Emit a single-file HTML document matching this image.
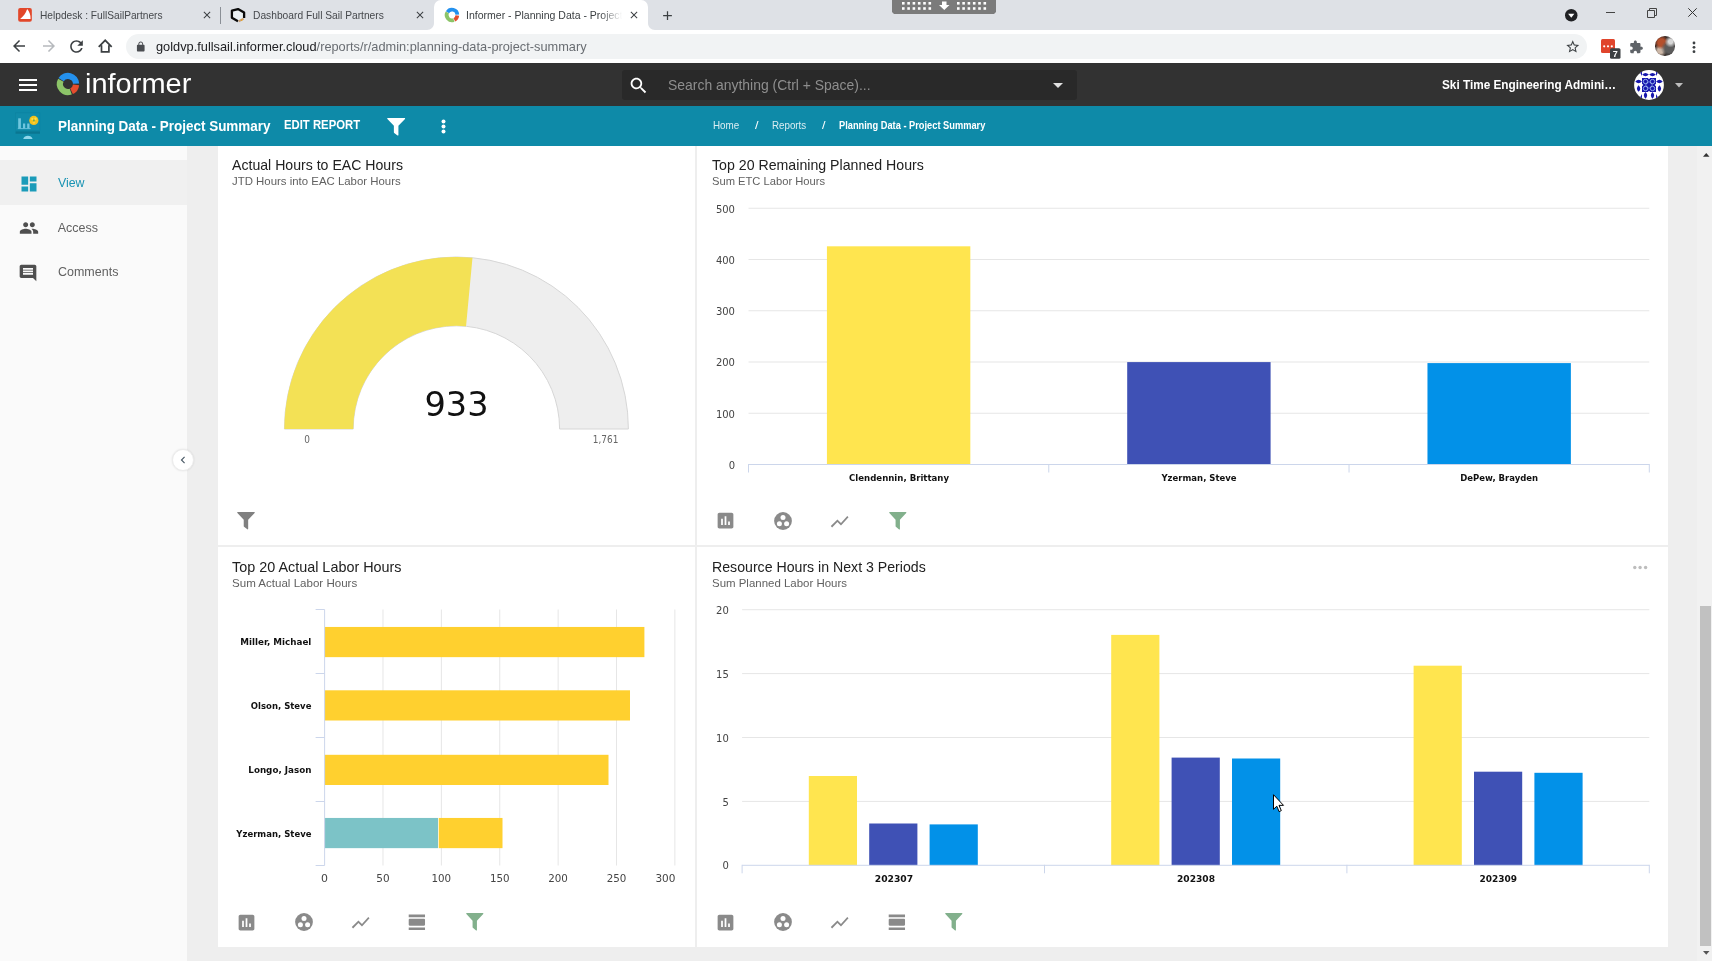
<!DOCTYPE html>
<html lang="en">
<head>
<meta charset="utf-8">
<title>Informer - Planning Data - Project Summary</title>
<style>
*{box-sizing:border-box;margin:0;padding:0}
html,body{width:1712px;height:961px;overflow:hidden;background:#eeeeee;font-family:"Liberation Sans",sans-serif;color:#212121}
#wrap{position:absolute;left:0;top:0;width:1712px;height:961px;overflow:hidden;will-change:transform;opacity:.9999}
.abs{position:absolute}
.t{position:absolute;white-space:nowrap;line-height:1;transform-origin:0 0}
#tabbar{left:0;top:0;width:1712px;height:30px;background:#dee1e6}
#addr{left:0;top:30px;width:1712px;height:33px;background:#ffffff}
#pill{left:126px;top:34px;width:1460.5px;height:25px;border-radius:12.5px;background:#f1f3f4}
#apphead{left:0;top:63px;width:1712px;height:43px;background:#323232}
#teal{left:0;top:106px;width:1712px;height:40px;background:#0e8aa8}
#side{left:0;top:146px;width:187px;height:815px;background:#fafafa}
#sideactive{left:0;top:160px;width:187px;height:45px;background:#f0f0f0}
#main{left:187px;top:146px;width:1525px;height:815px;background:#eeeeee}
.card{position:absolute;background:#fff}
svg{position:absolute;overflow:visible}
.cf{font-family:"DejaVu Sans","Liberation Sans",sans-serif}
</style>
</head>
<body>
<div id="wrap">
<!-- ===== browser chrome ===== -->
<div id="tabbar" class="abs"></div>
<div id="addr" class="abs"></div>
<div id="pill" class="abs"></div>
<div class="abs" style="left:434px;top:0;width:214px;height:30px;background:#fff;border-radius:7px 7px 0 0"></div>
<svg style="left:427px;top:23px" width="7" height="7" viewBox="0 0 7 7"><path fill="#fff" d="M7 0v7H0C4 7 7 4 7 0z"/></svg>
<svg style="left:648px;top:23px" width="7" height="7" viewBox="0 0 7 7"><path fill="#fff" d="M0 0v7h7C3 7 0 4 0 0z"/></svg>
<svg style="left:18px;top:8.100px" width="14" height="13.700" viewBox="0 0 14 14"><rect width="14" height="14" rx="2" fill="#e2472a"/><path fill="#fff" d="M9.200 1C8 5 5 9 2 11.300H12.700C12.900 7 11.500 3.500 9.200 1z"/></svg>
<div class="t" style="left:39.70px;top:9.75px;font:400 10.70px/1 'Liberation Sans',sans-serif;letter-spacing:0.000px;color:#45484c;transform:scaleX(0.9508);">Helpdesk : FullSailPartners</div>
<svg style="left:201.00px;top:9.00px" width="12.00" height="12.00" viewBox="0 0 24 24"><path fill="#3c4043" d="M19 6.410L17.590 5 12 10.590 6.410 5 5 6.410 10.590 12 5 17.590 6.410 19 12 13.410 17.590 19 19 17.590 13.410 12z" /></svg>
<div class="abs" style="left:220px;top:7px;width:1px;height:17px;background:#8a8f96"></div>
<svg style="left:229px;top:6px" width="18" height="18" viewBox="229 6 18 18"><path fill="#eaf0f3" d="M238 9l5.300 3v6.200l-5.300 3-5.300-3V12z"/><path fill="none" stroke="#0a0a0a" stroke-width="2.300" stroke-linejoin="round" d="M238 21.200l-6.100-3.500v-7.100L238 9.100l6.100 3.500v5.400"/><path fill="none" stroke="#c8a078" stroke-width="2" d="M243.600 18.600L238.600 21.300"/><circle cx="241.700" cy="20" r=".8" fill="#f2a000"/></svg>
<div class="t" style="left:253.00px;top:9.75px;font:400 10.70px/1 'Liberation Sans',sans-serif;letter-spacing:0.000px;color:#45484c;transform:scaleX(0.9576);">Dashboard Full Sail Partners</div>
<svg style="left:414.00px;top:9.00px" width="12.00" height="12.00" viewBox="0 0 24 24"><path fill="#3c4043" d="M19 6.410L17.590 5 12 10.590 6.410 5 5 6.410 10.590 12 5 17.590 6.410 19 12 13.410 17.590 19 19 17.590 13.410 12z" /></svg>
<svg style="left:442.500px;top:5.900px" width="18" height="18" viewBox="-9 -9 18 18"><g fill="none" stroke-width="3.70"><path stroke="#2491ee" d="M-4.54 -2.84A5.35 5.35 0 0 1 5.34 -0.28"/><path stroke="#8cc468" d="M1.83 5.03A5.35 5.35 0 0 1 -4.72 -2.51"/><path stroke="#e44d2e" d="M5.32 0.56A5.35 5.35 0 0 1 2.35 4.81"/></g></svg>
<div class="t" style="left:466px;top:0;width:160px;height:30px;overflow:hidden"><div class="t" style="left:0.30px;top:9.75px;font:400 10.70px/1 'Liberation Sans',sans-serif;letter-spacing:0.000px;color:#3c4043;transform:scaleX(0.9834);">Informer - Planning Data - Project Summary</div></div>
<div class="abs" style="left:600px;top:6px;width:26px;height:20px;background:linear-gradient(90deg,rgba(255,255,255,0),#fff 85%)"></div>
<svg style="left:627.50px;top:9.00px" width="12.00" height="12.00" viewBox="0 0 24 24"><path fill="#3c4043" d="M19 6.410L17.590 5 12 10.590 6.410 5 5 6.410 10.590 12 5 17.590 6.410 19 12 13.410 17.590 19 19 17.590 13.410 12z" /></svg>
<svg style="left:659.50px;top:7.50px" width="15.00" height="15.00" viewBox="0 0 24 24"><path fill="#3c4043" d="M19 13h-6v6h-2v-6H5v-2h6V5h2v6h6v2z" /></svg>
<svg style="left:892px;top:0" width="104" height="14" viewBox="0 0 104 14"><path fill="#7b7b7b" d="M0 0h104v12l-2 2H2l-2-2z"/><rect x="10.0" y="2.0" width="2.600" height="2.600" fill="#fff"/><rect x="10.0" y="7.2" width="2.600" height="2.600" fill="#fff"/><rect x="15.3" y="2.0" width="2.600" height="2.600" fill="#fff"/><rect x="15.3" y="7.2" width="2.600" height="2.600" fill="#fff"/><rect x="20.6" y="2.0" width="2.600" height="2.600" fill="#fff"/><rect x="20.6" y="7.2" width="2.600" height="2.600" fill="#fff"/><rect x="25.9" y="2.0" width="2.600" height="2.600" fill="#fff"/><rect x="25.9" y="7.2" width="2.600" height="2.600" fill="#fff"/><rect x="31.2" y="2.0" width="2.600" height="2.600" fill="#fff"/><rect x="31.2" y="7.2" width="2.600" height="2.600" fill="#fff"/><rect x="36.5" y="2.0" width="2.600" height="2.600" fill="#fff"/><rect x="36.5" y="7.2" width="2.600" height="2.600" fill="#fff"/><rect x="65.0" y="2.0" width="2.600" height="2.600" fill="#fff"/><rect x="65.0" y="7.2" width="2.600" height="2.600" fill="#fff"/><rect x="70.3" y="2.0" width="2.600" height="2.600" fill="#fff"/><rect x="70.3" y="7.2" width="2.600" height="2.600" fill="#fff"/><rect x="75.6" y="2.0" width="2.600" height="2.600" fill="#fff"/><rect x="75.6" y="7.2" width="2.600" height="2.600" fill="#fff"/><rect x="80.9" y="2.0" width="2.600" height="2.600" fill="#fff"/><rect x="80.9" y="7.2" width="2.600" height="2.600" fill="#fff"/><rect x="86.2" y="2.0" width="2.600" height="2.600" fill="#fff"/><rect x="86.2" y="7.2" width="2.600" height="2.600" fill="#fff"/><rect x="91.5" y="2.0" width="2.600" height="2.600" fill="#fff"/><rect x="91.5" y="7.2" width="2.600" height="2.600" fill="#fff"/><path fill="#fff" d="M50 1.500h4.500v3.500h3l-5.250 5-5.250-5h3z"/></svg>
<svg style="left:1565px;top:9px" width="12.500" height="12.500" viewBox="0 0 12 12"><circle cx="6" cy="6" r="6" fill="#202124"/><path fill="#fff" d="M3 4.500h6L6 8.500z"/></svg>
<div class="abs" style="left:1606px;top:12px;width:9px;height:1px;background:#444"></div>
<svg style="left:1647px;top:8px" width="10" height="10" viewBox="0 0 10 10"><path fill="none" stroke="#444" stroke-width="1" d="M.5 2.500h7v7h-7zM2.500 2.500v-2h7v7h-2"/></svg>
<svg style="left:1688px;top:8px" width="9" height="9" viewBox="0 0 9 9"><path fill="none" stroke="#333" stroke-width="1" d="M.3.300l8.400 8.400M8.700.300L.3 8.700"/></svg>
<svg style="left:10.30px;top:37.40px" width="18.00" height="18.00" viewBox="0 0 24 24"><path fill="#3c4043" d="M20 11H7.83l5.590-5.590L12 4l-8 8 8 8 1.41-1.41L7.83 13H20v-2z" /></svg>
<svg style="left:39.50px;top:37.40px" width="18.00" height="18.00" viewBox="0 0 24 24"><path fill="#b6b9bd" d="M12 4l-1.41 1.41L16.170 11H4v2h12.170l-5.580 5.590L12 20l8-8z" /></svg>
<svg style="left:66.50px;top:36.80px" width="19.00" height="19.00" viewBox="0 0 24 24"><path fill="#3c4043" d="M17.65 6.350C16.200 4.900 14.210 4 12 4c-4.420 0-7.990 3.580-7.990 8s3.570 8 7.990 8c3.730 0 6.840-2.550 7.730-6h-2.080c-.82 2.330-3.040 4-5.650 4-3.310 0-6-2.690-6-6s2.690-6 6-6c1.660 0 3.140.69 4.220 1.780L13 11h7V4l-2.350 2.350z" /></svg>
<svg style="left:96px;top:37px" width="18" height="18" viewBox="96 37 18 18"><path fill="none" stroke="#3c4043" stroke-width="1.700" d="M98.700 46.900L105.200 40.300L111.700 46.900M101.500 45.200V51.900H108.900V45.200"/></svg>
<svg style="left:135.20px;top:40.50px" width="11.50" height="11.50" viewBox="0 0 24 24"><path fill="#4a4d51" d="M18 8h-1V6c0-2.760-2.240-5-5-5S7 3.240 7 6v2H6c-1.100 0-2 .9-2 2v10c0 1.100.9 2 2 2h12c1.100 0 2-.9 2-2V10c0-1.100-.9-2-2-2zm-2.900 0H8.900V6c0-1.710 1.390-3.100 3.100-3.100 1.710 0 3.100 1.390 3.100 3.100v2z" /></svg>
<div class="t" style="left:155.70px;top:40.70px;font:400 12.40px/1 'Liberation Sans',sans-serif;letter-spacing:0.000px;color:#202124;transform:scaleX(1.0317);">goldvp.fullsail.informer.cloud<span style="color:#696d72">/reports/r/admin:planning-data-project-summary</span></div>
<svg style="left:1564.50px;top:38.50px" width="15.50" height="15.50" viewBox="0 0 24 24"><path fill="#3c4043" d="M22 9.240l-7.190-.62L12 2 9.190 8.630 2 9.240l5.460 4.730L5.820 21 12 17.270 18.180 21l-1.630-7.030L22 9.240zM12 15.400l-3.760 2.270 1-4.280-3.320-2.880 4.380-.38L12 6.100l1.710 4.040 4.380.38-3.320 2.880 1 4.280L12 15.400z" /></svg>
<svg style="left:1601px;top:39px" width="20" height="20" viewBox="0 0 20 20"><rect width="14" height="14" rx="1.500" fill="#e0452c"/><circle cx="3.200" cy="7.300" r="1.100" fill="#fff"/><circle cx="7" cy="7.300" r="1.100" fill="#fff"/><circle cx="10.800" cy="7.300" r="1.100" fill="#fff"/><rect x="9" y="9.200" width="10.500" height="10.600" rx="1.500" fill="#3c4043"/><text x="14.300" y="18" font-family="Liberation Sans" font-weight="700" font-size="9" fill="#fff" text-anchor="middle">7</text></svg>
<svg style="left:1629.10px;top:39.70px" width="14.50" height="14.50" viewBox="0 0 24 24"><path fill="#5f6368" d="M20.500 11H19V7c0-1.100-.9-2-2-2h-4V3.500C13 2.120 11.880 1 10.500 1S8 2.120 8 3.500V5H4c-1.100 0-1.990.9-1.990 2v3.800H3.500c1.490 0 2.700 1.210 2.700 2.700s-1.210 2.700-2.700 2.700H2V20c0 1.100.9 2 2 2h3.800v-1.500c0-1.490 1.210-2.700 2.700-2.700 1.490 0 2.700 1.210 2.700 2.700V22H17c1.100 0 2-.9 2-2v-4h1.500c1.380 0 2.500-1.120 2.500-2.500S21.880 11 20.500 11z" /></svg>
<div class="abs" style="left:1655.200px;top:36.400px;width:20px;height:19.600px;border-radius:50%;background:radial-gradient(circle at 78% 28%,#d8d8d8 0 10%,transparent 28%),radial-gradient(circle at 72% 62%,#5c5c5c 0 22%,transparent 45%),radial-gradient(circle at 32% 32%,#b5502c 0 18%,transparent 38%),radial-gradient(circle at 28% 72%,#cdb8a8 0 14%,transparent 32%),radial-gradient(circle at 50% 50%,#7a3a22 0 20%,transparent 45%),#2e2522"></div>
<svg style="left:1692px;top:40.500px" width="4" height="14" viewBox="0 0 4 14"><circle cx="2" cy="2" r="1.400" fill="#3c4043"/><circle cx="2" cy="6.300" r="1.400" fill="#3c4043"/><circle cx="2" cy="10.700" r="1.400" fill="#3c4043"/></svg>
<!-- ===== app header ===== -->
<div id="apphead" class="abs"></div>
<svg style="left:15.70px;top:72.70px" width="24.00" height="24.00" viewBox="0 0 24 24"><path fill="#fff" d="M3 18h18v-2H3v2zm0-5h18v-2H3v2zm0-7v2h18V6H3z" /></svg>
<svg style="left:54.100px;top:70.400px" width="28" height="28" viewBox="-14 -14 28 28"><g fill="none" stroke-width="6.20"><path stroke="#2491ee" d="M-6.87 -4.29A8.10 8.10 0 0 1 8.09 -0.42"/><path stroke="#8cc468" d="M2.77 7.61A8.10 8.10 0 0 1 -7.15 -3.80"/><path stroke="#e44d2e" d="M8.06 0.85A8.10 8.10 0 0 1 3.55 7.28"/></g></svg>
<div class="t" style="left:84.50px;top:70.50px;font:400 27.00px/1 'Liberation Sans',sans-serif;letter-spacing:0.000px;color:#fff;transform:scaleX(1.0737);">informer</div>
<div class="abs" style="left:622px;top:70px;width:455px;height:30px;border-radius:3px;background:#292929"></div>
<svg style="left:627.80px;top:74.50px" width="21.30" height="21.30" viewBox="0 0 24 24"><path fill="#fff" d="M15.5 14h-.79l-.28-.27C15.41 12.59 16 11.11 16 9.5 16 5.91 13.09 3 9.5 3S3 5.91 3 9.5 5.91 16 9.5 16c1.61 0 3.09-.59 4.23-1.57l.27.28v.79l5 4.99L20.49 19l-4.99-5zm-6 0C7.01 14 5 11.99 5 9.5S7.01 5 9.5 5 14 7.01 14 9.5 11.99 14 9.5 14z" /></svg>
<div class="t" style="left:667.50px;top:77.60px;font:400 14.20px/1 'Liberation Sans',sans-serif;letter-spacing:0.000px;color:#8e8e8e;transform:scaleX(0.9821);">Search anything (Ctrl + Space)...</div>
<svg style="left:1045.50px;top:73.20px" width="24.00" height="24.00" viewBox="0 0 24 24"><path fill="#e0e0e0" d="M7 10l5 5 5-5z" /></svg>
<div class="t" style="left:1441.80px;top:77.50px;font:700 13.60px/1 'Liberation Sans',sans-serif;letter-spacing:0.000px;color:#fff;transform:scaleX(0.8667);">Ski Time Engineering Admini…</div>
<svg style="left:1634px;top:69.800px" width="30" height="30" viewBox="0 0 30 30"><defs><clipPath id="avc"><circle cx="15" cy="15" r="14.900"/></clipPath></defs><g clip-path="url(#avc)"><rect width="30" height="30" fill="#fff"/><rect x="8" y="8" width="14" height="14" fill="#1717ad"/><circle cx="11.5" cy="11.5" r="2.200" fill="none" stroke="#bcdcff" stroke-width=".75"/><circle cx="18.5" cy="11.5" r="2.200" fill="none" stroke="#bcdcff" stroke-width=".75"/><circle cx="11.5" cy="18.5" r="2.200" fill="none" stroke="#bcdcff" stroke-width=".75"/><circle cx="18.5" cy="18.5" r="2.200" fill="none" stroke="#bcdcff" stroke-width=".75"/><path fill="none" stroke="#bcdcff" stroke-width=".5" d="M15 11.500l3.500 3.500-3.500 3.500-3.500-3.500z"/><path fill="#fff" d="M13.800 8h2.400L15 9.300zM13.800 22h2.400L15 20.700zM8 13.800v2.400L9.300 15zM22 13.800v2.400L20.700 15z"/><path fill="#1717ad" d="M8.20 4.60Q11.50 1.20 14.80 4.60Q11.50 8.00 8.20 4.60z"/><path fill="#1717ad" d="M15.20 4.60Q18.50 1.20 21.80 4.60Q18.50 8.00 15.20 4.60z"/><path fill="#1717ad" d="M11.50 22.10Q14.90 25.40 11.50 28.70Q8.10 25.40 11.50 22.10z"/><path fill="#1717ad" d="M18.50 22.10Q21.90 25.40 18.50 28.70Q15.10 25.40 18.50 22.10z"/><path fill="#1717ad" d="M1.30 11.50Q4.60 8.10 7.90 11.50Q4.60 14.90 1.30 11.50z"/><path fill="#1717ad" d="M4.60 15.20Q8.00 18.50 4.60 21.80Q1.20 18.50 4.60 15.20z"/><path fill="#1717ad" d="M22.10 11.50Q25.40 8.10 28.70 11.50Q25.40 14.90 22.10 11.50z"/><path fill="#1717ad" d="M25.40 15.20Q28.80 18.50 25.40 21.80Q22.00 18.50 25.40 15.20z"/><path fill="#1717ad" d="M8 1.500v4.500l-2-3.500zM22 1.500v4.500l2-3.500zM8 28.500v-4.500l-2 3.500zM22 28.500v-4.500l2 3.500z"/></g></svg>
<svg style="left:1674.500px;top:82.500px" width="8" height="4.500" viewBox="0 0 8 4.500"><path fill="#bdbdbd" d="M0 0h8L4 4.500z"/></svg>
<div id="teal" class="abs"></div>
<svg style="left:14px;top:110px" width="30" height="32" viewBox="14 110 30 32"><rect x="15.300" y="112.900" width="24.600" height="17.800" fill="#108ba9" stroke="#0c819e" stroke-width=".5"/><rect x="15.500" y="131.400" width="24.500" height="2.300" fill="#0a7691"/><g fill="#6fc6de"><rect x="18.200" y="118.300" width="2.700" height="10.200"/><rect x="23" y="123.500" width="2.200" height="5"/><rect x="27.200" y="123.500" width="2.300" height="5"/><rect x="17.800" y="128" width="12.800" height="1.100" opacity=".8"/></g><circle cx="33.800" cy="120.400" r="4.600" fill="#f2c21c"/><circle cx="32.300" cy="119" r="1.100" fill="#ffe04a"/><circle cx="35.500" cy="118.800" r="1.200" fill="#ffe04a"/><circle cx="33.900" cy="122.600" r="1.200" fill="#ffd23a"/><circle cx="33.900" cy="120.500" r=".9" fill="#6aa84f"/><path fill="#8fd6ea" d="M23.200 138.900c1.200-4.300 8.200-4.300 9.400 0z"/></svg>
<div class="t" style="left:58.20px;top:118.65px;font:700 14.30px/1 'Liberation Sans',sans-serif;letter-spacing:0.000px;color:#fff;transform:scaleX(0.9420);">Planning Data - Project Summary</div>
<div class="t" style="left:284.20px;top:119.05px;font:700 12.90px/1 'Liberation Sans',sans-serif;letter-spacing:0.000px;color:#fff;transform:scaleX(0.8777);">EDIT REPORT</div>
<svg style="left:387.00px;top:117.50px" width="18.40" height="17.70" viewBox="-0.5 0 19 18" preserveAspectRatio="none"><path fill="#fff" d="M0.3 0h17.4c.5 0 .7.5.4.9L11.300 8v9.300c0 .5-.5.8-.9.500L6.900 15.200c-.2-.15-.3-.4-.3-.6V8L-.1.9C-.4.5-.2 0 .3 0z"/></svg>
<svg style="left:440.500px;top:118.500px" width="5" height="15" viewBox="0 0 5 15"><circle cx="2.500" cy="2.500" r="2" fill="#fff"/><circle cx="2.500" cy="7.500" r="2" fill="#fff"/><circle cx="2.500" cy="12.500" r="2" fill="#fff"/></svg>
<div class="t" style="left:713.20px;top:120.00px;font:400 10.60px/1 'Liberation Sans',sans-serif;letter-spacing:0.000px;color:rgba(255,255,255,.85);transform:scaleX(0.9293);">Home</div>
<div class="t" style="left:754.50px;top:120.00px;font:400 10.60px/1 'Liberation Sans',sans-serif;letter-spacing:0.000px;color:#fff;transform:scaleX(1.1864);">/</div>
<div class="t" style="left:772.00px;top:120.00px;font:400 10.60px/1 'Liberation Sans',sans-serif;letter-spacing:0.000px;color:rgba(255,255,255,.85);transform:scaleX(0.9218);">Reports</div>
<div class="t" style="left:821.50px;top:120.00px;font:400 10.60px/1 'Liberation Sans',sans-serif;letter-spacing:0.000px;color:#fff;transform:scaleX(1.1864);">/</div>
<div class="t" style="left:839.30px;top:120.00px;font:700 10.60px/1 'Liberation Sans',sans-serif;letter-spacing:0.000px;color:#fff;transform:scaleX(0.8751);">Planning Data - Project Summary</div>
<!-- ===== sidebar ===== -->
<div id="main" class="abs"></div>
<div id="side" class="abs"></div>
<div id="sideactive" class="abs"></div>
<svg style="left:18.60px;top:174.00px" width="20.00" height="20.00" viewBox="0 0 24 24"><path fill="#1b9bb9" d="M3 13h8V3H3v10zm0 8h8v-6H3v6zm10 0h8V11h-8v10zm0-18v6h8V3h-8z" /></svg>
<div class="t" style="left:57.70px;top:176.75px;font:400 12.50px/1 'Liberation Sans',sans-serif;letter-spacing:0.000px;color:#1993b3;transform:scaleX(0.9870);">View</div>
<svg style="left:18.60px;top:218.30px" width="20.00" height="20.00" viewBox="0 0 24 24"><path fill="#4f4f4f" d="M16 11c1.66 0 2.99-1.34 2.99-3S17.66 5 16 5c-1.66 0-3 1.34-3 3s1.34 3 3 3zm-8 0c1.66 0 2.99-1.34 2.99-3S9.66 5 8 5C6.34 5 5 6.34 5 8s1.34 3 3 3zm0 2c-2.33 0-7 1.17-7 3.5V19h14v-2.500c0-2.33-4.67-3.5-7-3.5zm8 0c-.29 0-.62.02-.97.05 1.16.84 1.970 1.97 1.970 3.45V19h6v-2.500c0-2.33-4.67-3.5-7-3.5z" /></svg>
<div class="t" style="left:57.70px;top:221.75px;font:400 12.50px/1 'Liberation Sans',sans-serif;letter-spacing:0.000px;color:#616161;transform:scaleX(1.0000);">Access</div>
<svg style="left:17.80px;top:263.30px" width="20.00" height="20.00" viewBox="0 0 24 24"><path fill="#4f4f4f" d="M21.99 4c0-1.1-.89-2-1.99-2H4c-1.1 0-2 .9-2 2v12c0 1.1.9 2 2 2h14l4 4-.01-18zM18 14H6v-2h12v2zm0-3H6V9h12v2zm0-3H6V6h12v2z" /></svg>
<div class="t" style="left:57.70px;top:266.05px;font:400 12.50px/1 'Liberation Sans',sans-serif;letter-spacing:0.000px;color:#616161;transform:scaleX(0.9992);">Comments</div>
<div class="abs" style="left:171.500px;top:449.300px;width:22px;height:22px;border-radius:50%;background:#fff;border:1px solid #ececec;box-shadow:0 0 2px rgba(0,0,0,.10)"></div>
<svg style="left:176.00px;top:453.30px" width="14.00" height="14.00" viewBox="0 0 24 24"><path fill="#4a5a66" d="M15.41 7.41L14 6l-6 6 6 6 1.41-1.41L10.83 12z" /></svg>
<!-- ===== cards ===== -->
<div class="card" style="left:218px;top:146px;width:477px;height:399px"></div>
<div class="card" style="left:697px;top:146px;width:971px;height:399px"></div>
<div class="card" style="left:218px;top:547px;width:477px;height:399.5px"></div>
<div class="card" style="left:697px;top:547px;width:971px;height:399.5px"></div>
<div class="t" style="left:232.30px;top:158.00px;font:400 14.20px/1 'Liberation Sans',sans-serif;letter-spacing:0.000px;color:#212121;transform:scaleX(0.9945);">Actual Hours to EAC Hours</div>
<div class="t" style="left:232.30px;top:175.95px;font:400 11.50px/1 'Liberation Sans',sans-serif;letter-spacing:0.000px;color:#616161;transform:scaleX(0.9924);">JTD Hours into EAC Labor Hours</div>
<svg style="left:0;top:0" width="1712" height="961" viewBox="0 0 1712 961"><path fill="#eeeeee" stroke="#d6d6d6" stroke-width="1" d="M284.40 429.00A172 172 0 0 1 628.40 429.00L559.60 429.00A103.2 103.2 0 0 0 353.20 429.00z"/><path fill="#f3e155" d="M284.40 429.00A172 172 0 0 1 472.49 257.75L466.05 326.25A103.2 103.2 0 0 0 353.20 429.00z"/><text transform="translate(424.50 416.30) scale(0.9734 1)" font-family="DejaVu Sans,Liberation Sans,sans-serif" font-size="34.50" font-weight="400" fill="#111" letter-spacing="0.000">933</text><text transform="translate(304.30 442.60) scale(0.9344 1)" font-family="DejaVu Sans,Liberation Sans,sans-serif" font-size="9.60" font-weight="400" fill="#666" letter-spacing="0.000">0</text><text transform="translate(592.80 442.60) scale(0.9309 1)" font-family="DejaVu Sans,Liberation Sans,sans-serif" font-size="9.60" font-weight="400" fill="#666" letter-spacing="0.000">1,761</text></svg>
<svg style="left:237.30px;top:511.60px" width="18.00" height="17.50" viewBox="-0.5 0 19 18" preserveAspectRatio="none"><path fill="#808080" d="M0.3 0h17.4c.5 0 .7.5.4.9L11.300 8v9.300c0 .5-.5.8-.9.500L6.900 15.200c-.2-.15-.3-.4-.3-.6V8L-.1.9C-.4.5-.2 0 .3 0z"/></svg>
<div class="t" style="left:712.00px;top:158.00px;font:400 14.20px/1 'Liberation Sans',sans-serif;letter-spacing:0.000px;color:#212121;transform:scaleX(0.9984);">Top 20 Remaining Planned Hours</div>
<div class="t" style="left:712.00px;top:175.95px;font:400 11.50px/1 'Liberation Sans',sans-serif;letter-spacing:0.000px;color:#616161;transform:scaleX(0.9716);">Sum ETC Labor Hours</div>
<svg style="left:0;top:0" width="1712" height="961" viewBox="0 0 1712 961"><rect x="748.50" y="412.75" width="900.80" height="1" fill="#e6e6e6"/><rect x="748.50" y="361.50" width="900.80" height="1" fill="#e6e6e6"/><rect x="748.50" y="310.25" width="900.80" height="1" fill="#e6e6e6"/><rect x="748.50" y="259.00" width="900.80" height="1" fill="#e6e6e6"/><rect x="748.50" y="207.75" width="900.80" height="1" fill="#e6e6e6"/><text transform="translate(728.65 468.80) scale(1.0000 1)" font-family="DejaVu Sans,Liberation Sans,sans-serif" font-size="10.00" font-weight="400" fill="#444" letter-spacing="0.000">0</text><text transform="translate(715.90 417.55) scale(1.0000 1)" font-family="DejaVu Sans,Liberation Sans,sans-serif" font-size="10.00" font-weight="400" fill="#444" letter-spacing="0.000">100</text><text transform="translate(715.90 366.30) scale(1.0000 1)" font-family="DejaVu Sans,Liberation Sans,sans-serif" font-size="10.00" font-weight="400" fill="#444" letter-spacing="0.000">200</text><text transform="translate(715.90 315.05) scale(1.0000 1)" font-family="DejaVu Sans,Liberation Sans,sans-serif" font-size="10.00" font-weight="400" fill="#444" letter-spacing="0.000">300</text><text transform="translate(715.90 263.80) scale(1.0000 1)" font-family="DejaVu Sans,Liberation Sans,sans-serif" font-size="10.00" font-weight="400" fill="#444" letter-spacing="0.000">400</text><text transform="translate(715.90 212.55) scale(1.0000 1)" font-family="DejaVu Sans,Liberation Sans,sans-serif" font-size="10.00" font-weight="400" fill="#444" letter-spacing="0.000">500</text><rect x="826.93" y="246.30" width="143.400" height="218.20" fill="#ffe54f"/><rect x="1127.20" y="362.10" width="143.400" height="102.40" fill="#3f51b5"/><rect x="1427.47" y="363.10" width="143.400" height="101.40" fill="#0291e8"/><rect x="748.50" y="464.00" width="900.80" height="1" fill="#ccd6eb"/><rect x="748.00" y="464.00" width="1" height="8.500" fill="#ccd6eb"/><rect x="1048.27" y="464.00" width="1" height="8.500" fill="#ccd6eb"/><rect x="1348.53" y="464.00" width="1" height="8.500" fill="#ccd6eb"/><rect x="1648.80" y="464.00" width="1" height="8.500" fill="#ccd6eb"/><text transform="translate(849.00 480.50) scale(0.9338 1)" font-family="DejaVu Sans,Liberation Sans,sans-serif" font-size="9.20" font-weight="700" fill="#111" letter-spacing="0.000">Clendennin, Brittany</text><text transform="translate(1161.39 480.50) scale(0.9257 1)" font-family="DejaVu Sans,Liberation Sans,sans-serif" font-size="9.20" font-weight="700" fill="#111" letter-spacing="0.000">Yzerman, Steve</text><text transform="translate(1460.30 480.50) scale(0.9229 1)" font-family="DejaVu Sans,Liberation Sans,sans-serif" font-size="9.20" font-weight="700" fill="#111" letter-spacing="0.000">DePew, Brayden</text></svg>
<svg style="left:715.40px;top:510.30px" width="21.00" height="21.00" viewBox="0 0 24 24"><path fill="#8a8a8a" d="M19 3H5c-1.1 0-2 .9-2 2v14c0 1.1.9 2 2 2h14c1.1 0 2-.9 2-2V5c0-1.1-.9-2-2-2zM9 17H7v-7h2v7zm4 0h-2V7h2v10zm4 0h-2v-4h2v4z" /></svg>
<svg style="left:774.10px;top:511.80px" width="18" height="18" viewBox="-9 -9 18 18"><circle r="8.900" fill="#8a8a8a"/><circle cx="0" cy="-3.600" r="2.500" fill="#fff"/><circle cx="-3.600" cy="2.700" r="2.500" fill="#fff"/><circle cx="3.600" cy="2.700" r="2.500" fill="#fff"/></svg>
<svg style="left:829.20px;top:510.60px" width="21.30" height="21.30" viewBox="0 0 24 24"><path fill="#8a8a8a" d="M3.5 18.49l6-6.01 4 4L22 6.920l-1.41-1.41-7.09 7.970-4-4L2 16.99z" /></svg>
<svg style="left:888.60px;top:511.90px" width="17.60" height="17.60" viewBox="-0.5 0 19 18" preserveAspectRatio="none"><path fill="#82b08c" d="M0.3 0h17.4c.5 0 .7.5.4.9L11.300 8v9.300c0 .5-.5.8-.9.500L6.900 15.200c-.2-.15-.3-.4-.3-.6V8L-.1.9C-.4.5-.2 0 .3 0z"/></svg>
<div class="t" style="left:232.30px;top:559.80px;font:400 14.20px/1 'Liberation Sans',sans-serif;letter-spacing:0.000px;color:#212121;transform:scaleX(1.0140);">Top 20 Actual Labor Hours</div>
<div class="t" style="left:232.30px;top:577.65px;font:400 11.50px/1 'Liberation Sans',sans-serif;letter-spacing:0.000px;color:#616161;transform:scaleX(1.0044);">Sum Actual Labor Hours</div>
<svg style="left:0;top:0" width="1712" height="961" viewBox="0 0 1712 961"><rect x="382.48" y="609.50" width="1" height="256.00" fill="#e6e6e6"/><rect x="440.86" y="609.50" width="1" height="256.00" fill="#e6e6e6"/><rect x="499.24" y="609.50" width="1" height="256.00" fill="#e6e6e6"/><rect x="557.62" y="609.50" width="1" height="256.00" fill="#e6e6e6"/><rect x="616.00" y="609.50" width="1" height="256.00" fill="#e6e6e6"/><rect x="674.38" y="609.50" width="1" height="256.00" fill="#e6e6e6"/><rect x="324.60" y="626.95" width="319.80" height="30.200" fill="#ffd02f"/><rect x="324.60" y="690.30" width="305.40" height="30.200" fill="#ffd02f"/><rect x="324.60" y="754.80" width="283.90" height="30.200" fill="#ffd02f"/><rect x="324.60" y="817.95" width="113.40" height="30.200" fill="#7cc3c7"/><rect x="438.70" y="817.95" width="63.80" height="30.200" fill="#ffd02f"/><rect x="324.10" y="609.50" width="1" height="256.00" fill="#ccd6eb"/><rect x="315.60" y="609.00" width="9" height="1" fill="#ccd6eb"/><rect x="315.60" y="673.00" width="9" height="1" fill="#ccd6eb"/><rect x="315.60" y="737.00" width="9" height="1" fill="#ccd6eb"/><rect x="315.60" y="801.00" width="9" height="1" fill="#ccd6eb"/><rect x="315.60" y="865.00" width="9" height="1" fill="#ccd6eb"/><text transform="translate(240.30 645.40) scale(0.9538 1)" font-family="DejaVu Sans,Liberation Sans,sans-serif" font-size="9.20" font-weight="700" fill="#111" letter-spacing="0.000">Miller, Michael</text><text transform="translate(250.80 709.40) scale(0.9267 1)" font-family="DejaVu Sans,Liberation Sans,sans-serif" font-size="9.20" font-weight="700" fill="#111" letter-spacing="0.000">Olson, Steve</text><text transform="translate(248.30 773.40) scale(0.9532 1)" font-family="DejaVu Sans,Liberation Sans,sans-serif" font-size="9.20" font-weight="700" fill="#111" letter-spacing="0.000">Longo, Jason</text><text transform="translate(236.29 837.40) scale(0.9245 1)" font-family="DejaVu Sans,Liberation Sans,sans-serif" font-size="9.20" font-weight="700" fill="#111" letter-spacing="0.000">Yzerman, Steve</text><text transform="translate(321.12 882.10) scale(1.0945 1)" font-family="DejaVu Sans,Liberation Sans,sans-serif" font-size="10.00" font-weight="400" fill="#444" letter-spacing="0.000">0</text><text transform="translate(376.31 882.10) scale(1.0471 1)" font-family="DejaVu Sans,Liberation Sans,sans-serif" font-size="10.00" font-weight="400" fill="#444" letter-spacing="0.000">50</text><text transform="translate(431.51 882.10) scale(1.0314 1)" font-family="DejaVu Sans,Liberation Sans,sans-serif" font-size="10.00" font-weight="400" fill="#444" letter-spacing="0.000">100</text><text transform="translate(489.89 882.10) scale(1.0314 1)" font-family="DejaVu Sans,Liberation Sans,sans-serif" font-size="10.00" font-weight="400" fill="#444" letter-spacing="0.000">150</text><text transform="translate(548.27 882.10) scale(1.0314 1)" font-family="DejaVu Sans,Liberation Sans,sans-serif" font-size="10.00" font-weight="400" fill="#444" letter-spacing="0.000">200</text><text transform="translate(606.65 882.10) scale(1.0314 1)" font-family="DejaVu Sans,Liberation Sans,sans-serif" font-size="10.00" font-weight="400" fill="#444" letter-spacing="0.000">250</text><text transform="translate(655.40 882.10) scale(1.0524 1)" font-family="DejaVu Sans,Liberation Sans,sans-serif" font-size="10.00" font-weight="400" fill="#444" letter-spacing="0.000">300</text></svg>
<svg style="left:235.50px;top:911.70px" width="21.00" height="21.00" viewBox="0 0 24 24"><path fill="#8a8a8a" d="M19 3H5c-1.1 0-2 .9-2 2v14c0 1.1.9 2 2 2h14c1.1 0 2-.9 2-2V5c0-1.1-.9-2-2-2zM9 17H7v-7h2v7zm4 0h-2V7h2v10zm4 0h-2v-4h2v4z" /></svg>
<svg style="left:294.50px;top:913.20px" width="18" height="18" viewBox="-9 -9 18 18"><circle r="8.900" fill="#8a8a8a"/><circle cx="0" cy="-3.600" r="2.500" fill="#fff"/><circle cx="-3.600" cy="2.700" r="2.500" fill="#fff"/><circle cx="3.600" cy="2.700" r="2.500" fill="#fff"/></svg>
<svg style="left:349.70px;top:912.00px" width="21.30" height="21.30" viewBox="0 0 24 24"><path fill="#8a8a8a" d="M3.5 18.49l6-6.01 4 4L22 6.920l-1.41-1.41-7.09 7.970-4-4L2 16.99z" /></svg>
<svg style="left:407.10px;top:911.90px" width="20.60" height="20.60" viewBox="0 0 24 24"><path fill="#8a8a8a" d="M2 21h19v-3H2v3zM20 8H3c-.55 0-1 .45-1 1v6c0 .55.45 1 1 1h17c.55 0 1-.45 1-1V9c0-.55-.45-1-1-1zM2 3v3h19V3H2z" /></svg>
<svg style="left:465.70px;top:913.30px" width="17.60" height="17.60" viewBox="-0.5 0 19 18" preserveAspectRatio="none"><path fill="#82b08c" d="M0.3 0h17.4c.5 0 .7.5.4.9L11.300 8v9.300c0 .5-.5.8-.9.500L6.900 15.200c-.2-.15-.3-.4-.3-.6V8L-.1.9C-.4.5-.2 0 .3 0z"/></svg>
<div class="t" style="left:712.00px;top:559.80px;font:400 14.20px/1 'Liberation Sans',sans-serif;letter-spacing:0.000px;color:#212121;transform:scaleX(0.9967);">Resource Hours in Next 3 Periods</div>
<div class="t" style="left:712.00px;top:577.65px;font:400 11.50px/1 'Liberation Sans',sans-serif;letter-spacing:0.000px;color:#616161;transform:scaleX(0.9959);">Sum Planned Labor Hours</div>
<svg style="left:0;top:0" width="1712" height="961" viewBox="0 0 1712 961"><rect x="742.10" y="800.90" width="907.20" height="1" fill="#e6e6e6"/><rect x="742.10" y="737.00" width="907.20" height="1" fill="#e6e6e6"/><rect x="742.10" y="673.10" width="907.20" height="1" fill="#e6e6e6"/><rect x="742.10" y="609.20" width="907.20" height="1" fill="#e6e6e6"/><text transform="translate(722.45 869.40) scale(1.0000 1)" font-family="DejaVu Sans,Liberation Sans,sans-serif" font-size="10.00" font-weight="400" fill="#444" letter-spacing="0.000">0</text><text transform="translate(722.45 805.50) scale(1.0000 1)" font-family="DejaVu Sans,Liberation Sans,sans-serif" font-size="10.00" font-weight="400" fill="#444" letter-spacing="0.000">5</text><text transform="translate(716.05 741.60) scale(1.0000 1)" font-family="DejaVu Sans,Liberation Sans,sans-serif" font-size="10.00" font-weight="400" fill="#444" letter-spacing="0.000">10</text><text transform="translate(716.05 677.70) scale(1.0000 1)" font-family="DejaVu Sans,Liberation Sans,sans-serif" font-size="10.00" font-weight="400" fill="#444" letter-spacing="0.000">15</text><text transform="translate(716.05 613.80) scale(1.0000 1)" font-family="DejaVu Sans,Liberation Sans,sans-serif" font-size="10.00" font-weight="400" fill="#444" letter-spacing="0.000">20</text><rect x="808.80" y="776.00" width="48.200" height="89.30" fill="#ffe54f"/><rect x="869.20" y="823.50" width="48.200" height="41.80" fill="#3f51b5"/><rect x="929.60" y="824.40" width="48.200" height="40.90" fill="#0291e8"/><rect x="1111.20" y="634.90" width="48.200" height="230.40" fill="#ffe54f"/><rect x="1171.60" y="757.60" width="48.200" height="107.70" fill="#3f51b5"/><rect x="1232.00" y="758.50" width="48.200" height="106.80" fill="#0291e8"/><rect x="1413.60" y="665.70" width="48.200" height="199.60" fill="#ffe54f"/><rect x="1474.00" y="771.70" width="48.200" height="93.60" fill="#3f51b5"/><rect x="1534.40" y="772.80" width="48.200" height="92.50" fill="#0291e8"/><rect x="742.10" y="864.80" width="907.20" height="1" fill="#ccd6eb"/><rect x="741.60" y="864.80" width="1" height="8.500" fill="#ccd6eb"/><rect x="1044.00" y="864.80" width="1" height="8.500" fill="#ccd6eb"/><rect x="1346.40" y="864.80" width="1" height="8.500" fill="#ccd6eb"/><rect x="1648.80" y="864.80" width="1" height="8.500" fill="#ccd6eb"/><text transform="translate(874.80 882.10) scale(1.0000 1)" font-family="DejaVu Sans,Liberation Sans,sans-serif" font-size="9.20" font-weight="700" fill="#111" letter-spacing="0.000">202307</text><text transform="translate(1177.00 882.10) scale(0.9896 1)" font-family="DejaVu Sans,Liberation Sans,sans-serif" font-size="9.20" font-weight="700" fill="#111" letter-spacing="0.000">202308</text><text transform="translate(1479.40 882.10) scale(0.9792 1)" font-family="DejaVu Sans,Liberation Sans,sans-serif" font-size="9.20" font-weight="700" fill="#111" letter-spacing="0.000">202309</text><circle cx="1634.8" cy="567.500" r="1.700" fill="#bdbdbd"/><circle cx="1640.1" cy="567.500" r="1.700" fill="#bdbdbd"/><circle cx="1645.6" cy="567.500" r="1.700" fill="#bdbdbd"/></svg>
<svg style="left:715.40px;top:911.70px" width="21.00" height="21.00" viewBox="0 0 24 24"><path fill="#8a8a8a" d="M19 3H5c-1.1 0-2 .9-2 2v14c0 1.1.9 2 2 2h14c1.1 0 2-.9 2-2V5c0-1.1-.9-2-2-2zM9 17H7v-7h2v7zm4 0h-2V7h2v10zm4 0h-2v-4h2v4z" /></svg>
<svg style="left:774.10px;top:913.20px" width="18" height="18" viewBox="-9 -9 18 18"><circle r="8.900" fill="#8a8a8a"/><circle cx="0" cy="-3.600" r="2.500" fill="#fff"/><circle cx="-3.600" cy="2.700" r="2.500" fill="#fff"/><circle cx="3.600" cy="2.700" r="2.500" fill="#fff"/></svg>
<svg style="left:829.20px;top:912.00px" width="21.30" height="21.30" viewBox="0 0 24 24"><path fill="#8a8a8a" d="M3.5 18.49l6-6.01 4 4L22 6.920l-1.41-1.41-7.09 7.970-4-4L2 16.99z" /></svg>
<svg style="left:886.60px;top:911.90px" width="20.60" height="20.60" viewBox="0 0 24 24"><path fill="#8a8a8a" d="M2 21h19v-3H2v3zM20 8H3c-.55 0-1 .45-1 1v6c0 .55.45 1 1 1h17c.55 0 1-.45 1-1V9c0-.55-.45-1-1-1zM2 3v3h19V3H2z" /></svg>
<svg style="left:945.20px;top:913.30px" width="17.60" height="17.60" viewBox="-0.5 0 19 18" preserveAspectRatio="none"><path fill="#82b08c" d="M0.3 0h17.4c.5 0 .7.5.4.9L11.300 8v9.300c0 .5-.5.8-.9.500L6.900 15.200c-.2-.15-.3-.4-.3-.6V8L-.1.9C-.4.5-.2 0 .3 0z"/></svg>
<svg style="left:1272.500px;top:794px" width="12" height="19" viewBox="0 0 12 19"><path fill="#fff" stroke="#000" stroke-width="1" stroke-linejoin="round" d="M.5.700v14.600l3.300-3.100 2.300 5.400 2.200-.95-2.300-5.300h4.500z"/></svg>
<div class="abs" style="left:1697px;top:146px;width:15px;height:815px;background:#f1f1f1"></div>
<div class="abs" style="left:1700px;top:606px;width:11px;height:340px;background:#c1c1c1"></div>
<svg style="left:1702.500px;top:152.800px" width="6.500" height="3.800" viewBox="0 0 6.500 3.800"><path fill="#333" d="M0 3.800L3.250 0l3.250 3.800z"/></svg>
<svg style="left:1702.500px;top:951px" width="6.500" height="3.800" viewBox="0 0 6.500 3.800"><path fill="#555" d="M0 0h6.500L3.250 3.800z"/></svg>
</div>
</body>
</html>
